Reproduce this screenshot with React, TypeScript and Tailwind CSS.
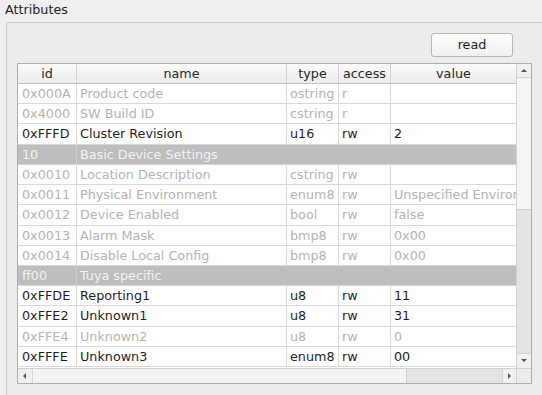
import type { ReactNode } from "react";

type Row = {
  id: string;
  name: string;
  type?: string;
  access?: string;
  value?: string;
  on?: boolean;
  section?: boolean;
};

const ROWS: Row[] = [
  { id: "0x000A", name: "Product code", type: "ostring", access: "r", value: "" },
  { id: "0x4000", name: "SW Build ID", type: "cstring", access: "r", value: "" },
  { id: "0xFFFD", name: "Cluster Revision", type: "u16", access: "rw", value: "2", on: true },
  { id: "10", name: "Basic Device Settings", section: true },
  { id: "0x0010", name: "Location Description", type: "cstring", access: "rw", value: "" },
  { id: "0x0011", name: "Physical Environment", type: "enum8", access: "rw", value: "Unspecified Environment" },
  { id: "0x0012", name: "Device Enabled", type: "bool", access: "rw", value: "false" },
  { id: "0x0013", name: "Alarm Mask", type: "bmp8", access: "rw", value: "0x00" },
  { id: "0x0014", name: "Disable Local Config", type: "bmp8", access: "rw", value: "0x00" },
  { id: "ff00", name: "Tuya specific", section: true },
  { id: "0xFFDE", name: "Reporting1", type: "u8", access: "rw", value: "11", on: true },
  { id: "0xFFE2", name: "Unknown1", type: "u8", access: "rw", value: "31", on: true },
  { id: "0xFFE4", name: "Unknown2", type: "u8", access: "rw", value: "0" },
  { id: "0xFFFE", name: "Unknown3", type: "enum8", access: "rw", value: "00", on: true },
];

// column widths incl. right grid line
const COLS = ["w-[59px]", "w-[210px]", "w-[52px]", "w-[52px]", "w-[125px]"];

function Arrow({ dir }: { dir: "up" | "down" | "left" | "right" }) {
  const pts = {
    up: "1,5 4,2 7,5",
    down: "1,2 4,5 7,2",
    left: "5,1 2,4 5,7",
    right: "2,1 5,4 2,7",
  }[dir];
  return (
    <svg width="8" height="8" viewBox="0 0 8 8">
      <polygon points={pts} fill="#555" />
    </svg>
  );
}

function Cell({ w, children, cls = "" }: { w: string; children?: ReactNode; cls?: string }) {
  return (
    <div className={`${w} shrink-0 h-full flex items-center whitespace-nowrap overflow-hidden ${cls}`}>
      {children}
    </div>
  );
}

function DataRow({ r }: { r: Row }) {
  if (r.section) {
    return (
      <div className="h-[20.23px] flex bg-[#bebebe] text-[#f4f4f4] border-b border-[#d6d6d6]">
        <Cell w={COLS[0]} cls="pl-[4px] border-r border-[#cfcfcf]">{r.id}</Cell>
        <Cell w="flex-1" cls="pl-[3px]">{r.name}</Cell>
      </div>
    );
  }
  const tc = r.on ? "text-[#1e1e1e]" : "text-[#b3b3b3]";
  const vals = [r.id, r.name, r.type, r.access, r.value];
  return (
    <div className={`h-[20.23px] flex bg-white border-b border-[#d9d9d9] ${tc}`}>
      {vals.map((v, i) => (
        <Cell key={i} w={COLS[i]} cls={i === 0 ? "pl-[4px] border-r border-[#d9d9d9]" : i < 4 ? "pl-[3px] border-r border-[#d9d9d9]" : "pl-[3px]"}>
          {v}
        </Cell>
      ))}
    </div>
  );
}

export default function App() {
  const heads = ["id", "name", "type", "access", "value"];
  return (
    <div
      className="w-[542px] h-[395px] overflow-hidden bg-[#efefef] text-[12.75px] text-[#1e1e1e]"
      style={{ fontFamily: '"DejaVu Sans", "Noto Sans", sans-serif' }}
    >
      <div className="h-[22px] pl-[5px] pt-[2px] leading-[15px]">Attributes</div>

      <div className="w-[545px] h-[380px] ml-[6px] border-t border-l border-r border-[#c9c9c9] rounded-tl-[3px] bg-[#ececec] pt-[10px]">
        <div className="flex">
          <button className="ml-[424px] w-[82px] h-[24px] rounded-[3px] border border-[#b7b7b7] bg-gradient-to-b from-[#fdfdfd] to-[#f0f0f0] text-[12.75px] text-[#1e1e1e] leading-none">
            read
          </button>
        </div>

        {/* table */}
        <div className="ml-[10px] mt-[6px] w-[515px] h-[321px] border border-[#adadad] bg-white flex flex-col">
          <div className="flex h-[304px]">
            <div className="w-[498px] flex flex-col">
              <div className="h-[20px] flex border-b border-[#c2c2c2] bg-gradient-to-b from-[#fbfbfb] to-[#ececec] text-[#262626]">
                {heads.map((h, i) => (
                  <div
                    key={h}
                    className={`${COLS[i]} shrink-0 h-full flex items-center justify-center ${i < 4 ? "border-r border-[#d2d2d2]" : ""}`}
                  >
                    {h}
                  </div>
                ))}
              </div>
              <div className="flex-1 overflow-hidden">
                {ROWS.map((r) => (
                  <DataRow key={r.id} r={r} />
                ))}
              </div>
            </div>

            {/* vertical scrollbar */}
            <div className="w-[16px] flex flex-col border-l border-[#d0d0d0] bg-[#e3e3e3]">
              <div className="h-[14px] flex items-center justify-center bg-[#f0f0f0] border-b border-[#d4d4d4]">
                <Arrow dir="up" />
              </div>
              <div className="h-[132px] bg-[#f4f4f4] border-b border-[#cfcfcf]" />
              <div className="flex-1" />
              <div className="h-[15px] flex items-center justify-center bg-[#f0f0f0] border-t border-[#d4d4d4]">
                <Arrow dir="down" />
              </div>
            </div>
          </div>

          {/* horizontal scrollbar */}
          <div className="flex h-[15px] border-t border-[#d0d0d0] bg-[#e3e3e3]">
            <div className="w-[15px] flex items-center justify-center bg-[#f0f0f0] border-r border-[#d4d4d4]">
              <Arrow dir="left" />
            </div>
            <div className="w-[374px] bg-[#f4f4f4] border-r border-[#cfcfcf]" />
            <div className="w-[95px]" />
            <div className="w-[14px] flex items-center justify-center bg-[#f0f0f0] border-l border-[#d4d4d4]">
              <Arrow dir="right" />
            </div>
            <div className="flex-1 bg-[#ececec] border-l border-[#d0d0d0]" />
          </div>
        </div>
      </div>
    </div>
  );
}
